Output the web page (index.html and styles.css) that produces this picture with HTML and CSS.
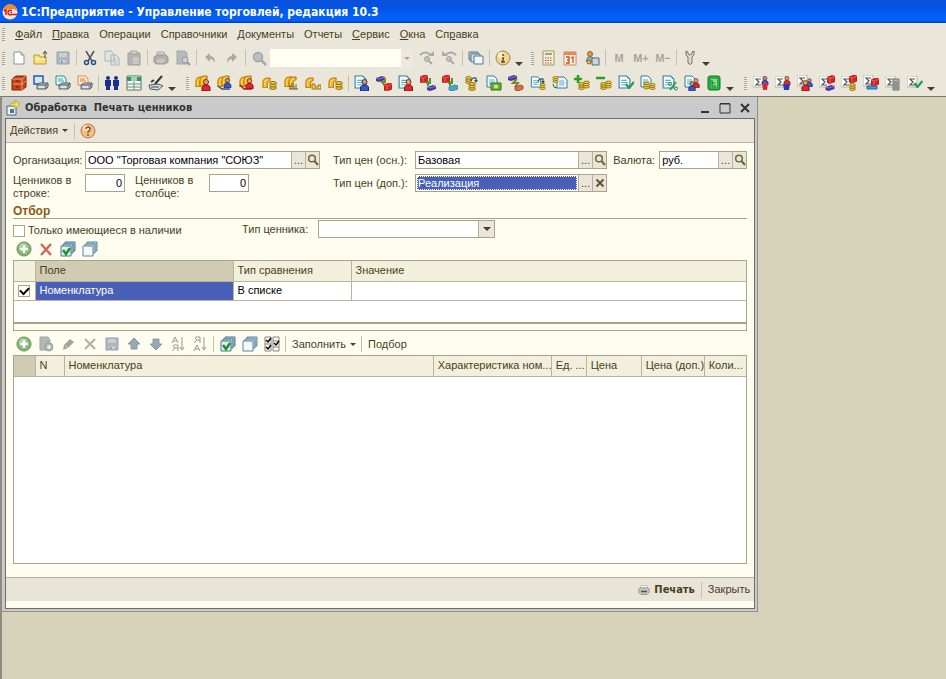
FILE: index.html
```
<!DOCTYPE html>
<html lang="ru">
<head>
  <meta charset="utf-8">
  <title>1С:Предприятие - Управление торговлей, редакция 10.3</title>
  <link rel="stylesheet" href="styles.css">
</head>
<body>
  <svg class="sprite" aria-hidden="true">
    <!-- parts used by the composite icons -->
    <symbol id="man-r" viewBox="0 0 10 12"><circle cx="5" cy="3" r="2.5" fill="#e8a070" stroke="#7a3020"/><path d="M1 12V8l2-2h4l2 2v4z" fill="#e0282c" stroke="#8a1018"/></symbol>
    <symbol id="man-b" viewBox="0 0 10 12"><circle cx="5" cy="3" r="2.5" fill="#c89878" stroke="#4a3040"/><path d="M1 12V8l2-2h4l2 2v4z" fill="#3858c0" stroke="#182a78"/></symbol>
    <symbol id="coin" viewBox="0 0 10 12"><path d="M1 12V6q0-5 5-5h3v3q-3 0-3 3v5z" fill="#f6b91c" stroke="#a86c08"/><path d="M3 10V6q0-3 4-3" fill="none" stroke="#ffe070"/></symbol>
    <symbol id="coins" viewBox="0 0 8 9"><g fill="#f2d040" stroke="#8a6a10"><ellipse cx="4" cy="7" rx="3.4" ry="1.4"/><ellipse cx="4" cy="4.500" rx="3.400" ry="1.400"/><ellipse cx="4" cy="2" rx="3.400" ry="1.400"/></g></symbol>
    <symbol id="sheet" viewBox="0 0 12 13"><path d="M1 1h7l3 3v8H1z" fill="#f4fcff" stroke="#2c7f9c"/><path d="M3 5h5M3 7h6M3 9h5" stroke="#58b0c8"/></symbol>
    <symbol id="cube" viewBox="0 0 8 8"><path d="M0 2l5-2 3 1v5L3 8 0 7z" fill="#d82424" stroke="#8c0e12" stroke-width=".7"/><path d="M0 2l3 1 5-2M3 3v5" stroke="#ff7060" stroke-width=".7" fill="none"/></symbol>
    <symbol id="slab" viewBox="0 0 9 6"><path d="M0 2l6-2 3 1v3L3 6 0 5z" fill="#4438a0"/><path d="M0 2l3 1 6-2" stroke="#9088e0" fill="none" stroke-width=".8"/></symbol>
    <symbol id="sigma" viewBox="0 0 11 12"><path d="M0 0h10v11H0z" fill="#fdfdfa" stroke="#b4b4aa"/><path d="M8 3H3l3 3-3 3h5" fill="none" stroke="#555" stroke-width="1.200"/></symbol>
    <symbol id="tick" viewBox="0 0 9 8"><path d="M1 3l3 4 5-6" fill="none" stroke="#249a50" stroke-width="2.200"/></symbol>
    <symbol id="turn" viewBox="0 0 9 7"><path d="M1 5q1-4 5-3v3" fill="none" stroke="#3a5060" stroke-width="1.200"/><path d="M4 4h4L6 7z" fill="#3a5060"/></symbol>
    <symbol id="chart" viewBox="0 0 10 9"><path d="M1 8h9M2 8V4M4 8V2M6 8V5M8 8V3" stroke="#6c5a20" fill="none"/></symbol>
    <symbol id="prn" viewBox="0 0 13 8"><path d="M1 3l3-2h8v4l-2 2H1z" fill="#c2c8cc" stroke="#545c66"/><path d="M1 3h9v4M10 3l2-2" fill="none" stroke="#545c66"/><path d="M3 5h5" stroke="#fff"/></symbol>

    <!-- standard toolbar -->
    <symbol id="logo" viewBox="0 0 16 16"><circle cx="8" cy="8" r="7.500" fill="#f7e3d0"/><path d="M1 7a7 7 0 0 1 14 0l-3-2H5z" fill="#f08a30"/><path d="M2 7l2-1v5M10 6.500q-4-1-4 2t4 2h5M10 8.500H8.500" fill="none" stroke="#d0201c" stroke-width="1.500"/></symbol>
    <symbol id="new" viewBox="0 0 16 16"><path d="M3 2h7l3 3v9H3z" fill="#fdfefe" stroke="#8296a0"/><path d="M10 2v3h3" fill="#cfe0e8" stroke="#8296a0"/></symbol>
    <symbol id="open" viewBox="0 0 16 16"><path d="M1 5h5l1 2h6v7H1z" fill="#f5e27c" stroke="#b39a38"/><path d="M2 9h10" stroke="#fff6b8"/><path d="M12 8V2M10 4l2-3 2 3" fill="none" stroke="#555030"/></symbol>
    <symbol id="save" viewBox="0 0 16 16"><path d="M2 2h12v12H2z" fill="#aab6c0" stroke="#97a4af"/><path d="M4 3h8v4H4zM5 10h6v3H5z" fill="#c8d0d4"/><path d="M6 11h1v2" stroke="#8794a0"/></symbol>
    <symbol id="cut" viewBox="0 0 16 16"><path d="M4 1l6 10M12 1L6 11" stroke="#50565e" stroke-width="1.500"/><circle cx="4.500" cy="12.500" r="2" fill="none" stroke="#2a4c8c" stroke-width="1.500"/><circle cx="11.500" cy="12.500" r="2" fill="none" stroke="#2a4c8c" stroke-width="1.500"/></symbol>
    <symbol id="copy" viewBox="0 0 16 16"><g fill="#dfe3e2" stroke="#a8b2b6"><path d="M1 1h6l3 3v7H1zM7 5h5l3 3v7H7z"/></g><path d="M9 9h3M9 11h4M9 13h4" stroke="#b6c0c4"/></symbol>
    <symbol id="paste" viewBox="0 0 16 16"><path d="M2 3h12v12H2z" fill="#b4b4b2" stroke="#a09f9c"/><path d="M5 1h6v3H5z" fill="#dad8d0" stroke="#a09f9c"/><path d="M7 7h6v7H7z" fill="#c6c8c8"/></symbol>
    <symbol id="print" viewBox="0 0 16 16"><path d="M4 2h7l1 4H4z" fill="#d4d2ca" stroke="#aaa9a3"/><path d="M1 7l3-2h9l2 2v5l-3 2H3l-2-2z" fill="#b0afaa" stroke="#9c9b97"/><path d="M4 10h8M4 12h7" stroke="#dddad2"/></symbol>
    <symbol id="preview" viewBox="0 0 16 16"><path d="M2 1h8l2 2v11H2z" fill="#b6babc" stroke="#a4a8aa"/><circle cx="10" cy="10" r="3" fill="#ccd0d0" stroke="#93989c"/><path d="M12 12l3 3" stroke="#93989c" stroke-width="2"/></symbol>
    <symbol id="undo" viewBox="0 0 16 16"><path d="M3 7l5-4v3q5 0 5 7-2-4-5-4v3z" fill="#aaa8a2"/></symbol>
    <symbol id="redo" viewBox="0 0 16 16"><path d="M13 7L8 3v3q-5 0-5 7 2-4 5-4v3z" fill="#aaa8a2"/></symbol>
    <symbol id="find" viewBox="0 0 16 16"><circle cx="7" cy="7" r="4.500" fill="#b9bfc4" stroke="#a0a4a8" stroke-width="1.500"/><path d="M10 10l5 5" stroke="#aaa8a4" stroke-width="2.500"/></symbol>
    <symbol id="next" viewBox="0 0 16 16"><path d="M1 5q5-5 11 0" fill="none" stroke="#aaa9a4" stroke-width="2"/><path d="M9 6h6V1z" fill="#aaa9a4"/><circle cx="8" cy="9" r="2.500" fill="#c0c2c2" stroke="#a0a2a4"/><path d="M10 11l3 3" stroke="#a8a6a2" stroke-width="2"/></symbol>
    <symbol id="prev" viewBox="0 0 16 16"><path d="M15 5Q10 0 4 5" fill="none" stroke="#aaa9a4" stroke-width="2"/><path d="M7 6H1V1z" fill="#aaa9a4"/><circle cx="8" cy="9" r="2.500" fill="#c0c2c2" stroke="#a0a2a4"/><path d="M10 11l3 3" stroke="#a8a6a2" stroke-width="2"/></symbol>
    <symbol id="windows" viewBox="0 0 16 16"><g stroke="#55788c"><path d="M1 2h9v8H1z" fill="#b4cbd6"/><path d="M3 4h9v8H3z" fill="#cfe0e8"/><path d="M6 6h9v8H6z" fill="#f2f8fa"/></g></symbol>
    <symbol id="info" viewBox="0 0 16 16"><circle cx="8" cy="8" r="7" fill="#f0d490" stroke="#a08548"/><circle cx="6" cy="5" r="3" fill="#fcf0c8"/><path d="M8 4v2M8 7v5M6 12h4" stroke="#5c5030" stroke-width="1.600"/></symbol>
    <symbol id="calc" viewBox="0 0 16 16"><path d="M3 1h11v14H3z" fill="#f4f0d8" stroke="#a09868"/><path d="M5 3h7v2H5z" fill="#a8a070"/><path d="M5 8h7M5 10.500h7M5 13h7" stroke="#a85838" stroke-dasharray="1.500 1"/></symbol>
    <symbol id="cal" viewBox="0 0 16 16"><path d="M2 2h12v13H2z" fill="#fff6e4" stroke="#c08868"/><path d="M2 2h12v3H2z" fill="#e88850"/><path d="M4 7h3v6H4M5 10h2M9 8l2-1v6" fill="none" stroke="#d04820" stroke-width="1.300"/></symbol>
    <symbol id="users" viewBox="0 0 16 16"><circle cx="6" cy="4" r="2.500" fill="#e89a38" stroke="#9c6018"/><path d="M2 11l2-4h4l2 4z" fill="#a4b4c0" stroke="#627480"/><path d="M8 8h7v7H8z" fill="#c8d6de" stroke="#506878"/><circle cx="5" cy="12" r="2" fill="#e0c460" stroke="#806820"/></symbol>
    <symbol id="wrench" viewBox="0 0 16 16"><path d="M4 1v4l2 2v6q2 3 4 0V7l2-2V1l-2 1v2l-2 1-2-1V2z" fill="#dedad0" stroke="#77736c"/></symbol>

    <!-- trade toolbars -->
    <symbol id="box" viewBox="0 0 16 16"><path d="M1 4l4-3h10v11l-4 3H1z" fill="#c44418" stroke="#7a250c"/><path d="M1 4h10v11M11 4l4-3M2 9h9l4-3" fill="none" stroke="#f2a070"/><path d="M5 6h3M5 12h3" stroke="#601c08"/></symbol>
    <symbol id="pc-b" viewBox="0 0 16 16"><path d="M1 1h9v8H1z" fill="#d2e8ff" stroke="#2858b0" stroke-width="1.500"/><use href="#prn" x="3" y="7" width="13" height="8"/></symbol>
    <symbol id="pc-g" viewBox="0 0 16 16"><path d="M1 1h8l2 3v6H1z" fill="#e4f8f4" stroke="#308c90"/><path d="M3 4h5M3 6h6" stroke="#48a8a0"/><use href="#prn" x="3" y="7" width="13" height="8"/></symbol>
    <symbol id="pc-o" viewBox="0 0 16 16"><path d="M1 1h8l2 3v6H1z" fill="#fff0dc" stroke="#e08848"/><path d="M3 4h5M3 6h6" stroke="#e07030"/><use href="#prn" x="3" y="7" width="13" height="8"/></symbol>
    <symbol id="pair" viewBox="0 0 16 16"><g fill="#182f90"><circle cx="4" cy="3" r="2"/><circle cx="12" cy="3" r="2"/><path d="M1 5h6v6H6v4H2v-4H1zM9 5h6v6h-1v4h-4v-4H9z"/></g></symbol>
    <symbol id="grid" viewBox="0 0 16 16"><path d="M1 1h14v14H1z" fill="#f8fcf6" stroke="#557a68"/><path d="M1 2h14v4H1z" fill="#389464"/><path d="M5 2h6v4H5z" fill="#98d8ac"/><path d="M1 9h14M1 12h14M8 6v9" stroke="#6c8c7c"/></symbol>
    <symbol id="write" viewBox="0 0 16 16"><path d="M1 10l9-1 5 2-5 4-8-1z" fill="#d8dce0" stroke="#505860"/><path d="M3 7l3-2M14 1L7 9" stroke="#303840" stroke-width="2"/><path d="M3 12h8" stroke="#404850"/></symbol>
    <symbol id="c-r" viewBox="0 0 16 16"><use href="#coin" x="0" y="1" width="9" height="11"/><use href="#coin" x="4" y="0" width="9" height="11"/><use href="#man-r" x="6" y="4" width="10" height="12"/></symbol>
    <symbol id="c-b" viewBox="0 0 16 16"><use href="#coin" x="0" y="1" width="9" height="11"/><use href="#coin" x="4" y="0" width="9" height="11"/><use href="#man-b" x="6" y="3" width="9" height="10"/><path d="M1 11l4 3h8" fill="none" stroke="#404870" stroke-width="1.500"/></symbol>
    <symbol id="c-rr" viewBox="0 0 16 16"><use href="#coin" x="0" y="1" width="9" height="11"/><use href="#coin" x="4" y="0" width="9" height="11"/><use href="#man-r" x="6" y="3" width="9" height="11"/><path d="M1 10l4 4h8" fill="none" stroke="#a01c18" stroke-width="1.500"/></symbol>
    <symbol id="c-c" viewBox="0 0 16 16"><use href="#coin" x="1" y="2" width="9" height="11"/><use href="#coins" x="8" y="6" width="8" height="9"/></symbol>
    <symbol id="c-h" viewBox="0 0 16 16"><use href="#coin" x="1" y="1" width="9" height="11"/><use href="#coin" x="5" y="1" width="9" height="11"/><use href="#chart" x="5" y="6" width="10" height="9"/></symbol>
    <symbol id="c-s" viewBox="0 0 16 16"><use href="#coin" x="0" y="2" width="9" height="11"/><path d="M7 9h3v3h3v-2h3v4H7z" fill="#f0d050" stroke="#967214"/></symbol>
    <symbol id="s-b" viewBox="0 0 16 16"><use href="#sheet" x="0" y="0" width="13" height="14"/><use href="#man-b" x="5" y="4" width="11" height="12"/></symbol>
    <symbol id="s-r" viewBox="0 0 16 16"><use href="#sheet" x="0" y="0" width="13" height="14"/><use href="#man-r" x="5" y="4" width="11" height="12"/></symbol>
    <symbol id="move-a" viewBox="0 0 16 16"><use href="#slab" x="0" y="1" width="9" height="6"/><path d="M9 3v4H6l3 4" fill="none" stroke="#7a8820" stroke-width="2"/><use href="#cube" x="8" y="8" width="8" height="8"/></symbol>
    <symbol id="move-b" viewBox="0 0 16 16"><use href="#cube" x="0" y="0" width="8" height="8"/><path d="M10 3v5H6M8 6v5" fill="none" stroke="#52982c" stroke-width="2"/><use href="#slab" x="7" y="10" width="9" height="6"/></symbol>
    <symbol id="move-d" viewBox="0 0 16 16"><use href="#cube" x="0" y="0" width="8" height="8"/><path d="M10 3v5H6M8 6v5" fill="none" stroke="#52982c" stroke-width="2"/><path d="M7 12l6-2 3 1v3l-6 2-3-1z" fill="#48a8d4" stroke="#286890" stroke-width=".7"/></symbol>
    <symbol id="move-c" viewBox="0 0 16 16"><use href="#slab" x="0" y="0" width="9" height="6"/><path d="M9 4L5 8h5l-3 4" fill="none" stroke="#7a8820" stroke-width="2"/><path d="M7 12l5-2 3 1v3l-5 2-3-1z" fill="#e06a50" stroke="#8a3020" stroke-width=".7"/></symbol>
    <symbol id="cc" viewBox="0 0 16 16"><use href="#coins" x="1" y="1" width="7" height="8"/><use href="#coins" x="4" y="7" width="8" height="9"/><use href="#turn" x="6" y="1" width="9" height="7"/></symbol>
    <symbol id="s-g" viewBox="0 0 16 16"><use href="#sheet" x="0" y="0" width="12" height="13"/><path d="M5 8h10v7H5z" fill="#6cae34" stroke="#35701c"/><circle cx="10" cy="11.500" r="2" fill="#d8e878"/></symbol>
    <symbol id="s-t" viewBox="0 0 16 16"><use href="#sheet" x="0" y="1" width="12" height="12"/><use href="#coins" x="9" y="8" width="7" height="7"/><use href="#turn" x="7" y="2" width="9" height="7"/></symbol>
    <symbol id="s-u" viewBox="0 0 16 16"><use href="#sheet" x="4" y="1" width="12" height="13"/><use href="#coins" x="0" y="1" width="7" height="7"/><path d="M1 9q0 4 4 4" fill="none" stroke="#3a5060"/></symbol>
    <symbol id="plus-c" viewBox="0 0 16 16"><path d="M4 0v8M0 4h8" stroke="#28a028" stroke-width="2.500"/><use href="#coins" x="4" y="7" width="7" height="8"/><use href="#coins" x="9" y="4" width="7" height="11"/></symbol>
    <symbol id="minus-c" viewBox="0 0 16 16"><path d="M0 3h9" stroke="#28a028" stroke-width="2.500"/><use href="#coins" x="4" y="7" width="7" height="8"/><use href="#coins" x="9" y="4" width="7" height="11"/></symbol>
    <symbol id="s-v" viewBox="0 0 16 16"><use href="#sheet" x="0" y="0" width="13" height="14"/><use href="#tick" x="7" y="6" width="9" height="8"/></symbol>
    <symbol id="s-c" viewBox="0 0 16 16"><use href="#sheet" x="0" y="0" width="12" height="13"/><use href="#coins" x="3" y="6" width="7" height="9"/><use href="#coins" x="9" y="8" width="7" height="7"/></symbol>
    <symbol id="s-p" viewBox="0 0 16 16"><use href="#sheet" x="0" y="0" width="13" height="14"/><path d="M14 7l-6 8" stroke="#209048" stroke-width="1.500"/><circle cx="8" cy="9" r="1.500" fill="none" stroke="#209048"/><circle cx="14" cy="13.500" r="1.500" fill="none" stroke="#209048"/></symbol>
    <symbol id="s-rb" viewBox="0 0 16 16"><use href="#sheet" x="0" y="0" width="12" height="13"/><use href="#man-r" x="8" y="3" width="8" height="10"/><use href="#man-b" x="4" y="6" width="8" height="10"/></symbol>
    <symbol id="book" viewBox="0 0 16 16"><rect x="2" y="1" width="12" height="14" rx="2" fill="#28b044" stroke="#127028"/><path d="M5 4h6v8H5z" fill="#80e088"/><path d="M6 5v6h4M6 8h3" fill="none" stroke="#127028"/></symbol>
    <symbol id="g-1" viewBox="0 0 16 16"><use href="#sigma" x="0" y="1" width="11" height="12"/><use href="#man-b" x="8" y="1" width="8" height="9"/><path d="M9 8h6l-1 7h-4z" fill="#d82838"/></symbol>
    <symbol id="g-2" viewBox="0 0 16 16"><use href="#sigma" x="0" y="1" width="11" height="12"/><use href="#man-r" x="8" y="1" width="8" height="9"/><path d="M8 9h7l-1 6H9z" fill="#3038b0"/></symbol>
    <symbol id="g-3" viewBox="0 0 16 16"><use href="#sigma" x="0" y="0" width="11" height="12"/><use href="#man-b" x="9" y="3" width="7" height="9"/><use href="#man-r" x="4" y="5" width="9" height="11"/></symbol>
    <symbol id="g-4" viewBox="0 0 16 16"><use href="#sigma" x="0" y="1" width="11" height="12"/><use href="#cube" x="8" y="0" width="8" height="9"/><use href="#slab" x="6" y="10" width="10" height="6"/></symbol>
    <symbol id="g-5" viewBox="0 0 16 16"><use href="#sigma" x="0" y="1" width="11" height="12"/><use href="#cube" x="8" y="0" width="8" height="8"/><use href="#coins" x="8" y="8" width="7" height="8"/></symbol>
    <symbol id="g-6" viewBox="0 0 16 16"><use href="#sigma" x="0" y="0" width="11" height="12"/><use href="#cube" x="8" y="3" width="8" height="8"/><path d="M4 11h10v3H4z" fill="#40a0d0" stroke="#2860a0"/></symbol>
    <symbol id="g-7" viewBox="0 0 16 16"><use href="#sigma" x="0" y="1" width="11" height="12"/><path d="M8 4h6v11H8z" fill="#b4b4b0" stroke="#70706c"/><path d="M9 7h4M9 9h4M9 11h4M9 13h4" stroke="#70706c"/></symbol>
    <symbol id="g-8" viewBox="0 0 16 16"><use href="#sigma" x="0" y="1" width="11" height="12"/><use href="#tick" x="6" y="5" width="10" height="8"/></symbol>

    <!-- window and grid commands -->
    <symbol id="proc" viewBox="0 0 16 16"><path d="M2 6h9v9H2z" fill="#eaf2f6" stroke="#406c88"/><path d="M5 9h4v4H5z" fill="#3f7ba0"/><path d="M5 7q0-5 5-4V0l5 4-5 5V6Q7 5 5 7z" fill="#f0e060" stroke="#a09030" stroke-width=".7"/></symbol>
    <symbol id="help" viewBox="0 0 16 16"><circle cx="8" cy="8" r="7" fill="#f4bd86" stroke="#b07a48"/><circle cx="6" cy="5" r="3" fill="#fce0c0"/><path d="M6 6q0-2 2-2t2 2-2 3v1M8 11v2" fill="none" stroke="#8a4c20" stroke-width="1.400"/></symbol>
    <symbol id="add" viewBox="0 0 16 16"><circle cx="8" cy="8" r="7" fill="#8ab878" stroke="#5f9058"/><circle cx="7" cy="6" r="4" fill="#a8cf96"/><path d="M8 4v8M4 8h8" stroke="#fff" stroke-width="2.500"/></symbol>
    <symbol id="del" viewBox="0 0 16 16"><path d="M3 3l10 11M13 3L3 14" stroke="#d06858" stroke-width="2.500"/></symbol>
    <symbol id="all" viewBox="0 0 16 16"><g stroke="#447890"><path d="M5 1h10v9H5z" fill="#a4c8d8"/><path d="M3 3h10v9H3z" fill="#b8d6e2"/><path d="M1 5h10v10H1z" fill="#e0f0ea"/></g><path d="M3 9l3 4 4-6" fill="none" stroke="#229030" stroke-width="2.500"/></symbol>
    <symbol id="none" viewBox="0 0 16 16"><g stroke="#5c87a0"><path d="M5 1h10v9H5z" fill="#a8c8dc"/><path d="M3 3h10v9H3z" fill="#bcd6e4"/><path d="M1 5h10v10H1z" fill="#f4f9fc"/></g></symbol>
    <symbol id="addcopy" viewBox="0 0 16 16"><path d="M2 1h8l2 3v10H2z" fill="#b0b9b6" stroke="#9ca8a8"/><circle cx="11" cy="11" r="4" fill="#b4bcb4" stroke="#949c98"/><path d="M11 9v4M9 11h4" stroke="#fff"/></symbol>
    <symbol id="edit" viewBox="0 0 16 16"><path d="M3 14l1-5 6-6 4 3-6 6z" fill="#a2a39c"/><path d="M5 9l3 3" stroke="#d8d6cc"/></symbol>
    <symbol id="delg" viewBox="0 0 16 16"><path d="M3 3l10 10M13 3L3 13" stroke="#b2b0a8" stroke-width="2"/></symbol>
    <symbol id="up" viewBox="0 0 16 16"><path d="M8 2l6 6h-3v5H5V8H2z" fill="#9aa8b2" stroke="#8798a4"/></symbol>
    <symbol id="down" viewBox="0 0 16 16"><path d="M8 14l6-6h-3V3H5v5H2z" fill="#9aa8b2" stroke="#8798a4"/></symbol>
    <symbol id="asc" viewBox="0 0 16 16"><path d="M2 7l3-6 3 6M3 5h4M8 15V9H4q-2 2 1 3h3M5 12l-3 3M12 1v12M10 11l2 3 2-3" fill="none" stroke="#999a94"/></symbol>
    <symbol id="desc" viewBox="0 0 16 16"><path d="M2 15l3-6 3 6M3 13h4M8 7V1H4Q2 3 5 4h3M5 4L2 7M12 1v12M10 11l2 3 2-3" fill="none" stroke="#999a94"/></symbol>
    <symbol id="marks" viewBox="0 0 16 16"><path d="M1 1h6v14H1zM9 1h6v14H9z" fill="#f8f8f0" stroke="#88887c"/><path d="M1 8h6M9 5h6M9 11h6" stroke="#88887c"/><path d="M2 4l2 2 3-4M2 11l2 2 3-4M10 7l2 2 3-4" fill="none" stroke="#000" stroke-width="1.400"/></symbol>
    <symbol id="printer" viewBox="0 0 16 16"><path d="M4 2h8l1 4H3z" fill="#fff" stroke="#b4b2ac"/><path d="M1 7l2-2h10l2 2v4l-3 3H4l-3-3z" fill="#c4c4c0" stroke="#84847e"/><path d="M4 9h8v2H4z" fill="#4c4c48"/></symbol>
    <symbol id="lens" viewBox="0 0 12 12"><circle cx="5" cy="4.500" r="3.300" fill="none" stroke="#6d6835" stroke-width="1.500"/><path d="M7.500 7l3.500 4" stroke="#6d6835" stroke-width="2"/></symbol>
    <symbol id="cross" viewBox="0 0 12 12"><path d="M2.500 2.500l7 7M9.500 2.500l-7 7" stroke="#5c5630" stroke-width="2"/></symbol>
    <symbol id="w-min" viewBox="0 0 12 12"><path d="M2 10h8" stroke="#333" stroke-width="2"/></symbol>
    <symbol id="w-max" viewBox="0 0 12 12"><path d="M1 2h10v9H1z" fill="none" stroke="#333"/><path d="M1 1.500h10" stroke="#333"/></symbol>
    <symbol id="w-close" viewBox="0 0 12 12"><path d="M2 2l8 8M10 2l-8 8" stroke="#333" stroke-width="2"/></symbol>
  </svg>

  <header class="title-bar">
    <svg class="icon"><use href="#logo"/></svg>
    <h1>1С:Предприятие - Управление торговлей, редакция 10.3</h1>
  </header>

  <nav class="menu">
    <span class="grip"></span>
    <a href="#"><u>Ф</u>айл</a>
    <a href="#"><u>П</u>равка</a>
    <a href="#">Операции</a>
    <a href="#">Справочники</a>
    <a href="#">Документы</a>
    <a href="#">Отчеты</a>
    <a href="#"><u>С</u>ервис</a>
    <a href="#"><u>О</u>кна</a>
    <a href="#">Сп<u>р</u>авка</a>
  </nav>

  <div class="toolbar">
    <div class="group">
      <span class="grip"></span>
      <button aria-label="Новый"><svg class="icon"><use href="#new"/></svg></button>
      <button aria-label="Открыть"><svg class="icon"><use href="#open"/></svg></button>
      <button aria-label="Сохранить"><svg class="icon"><use href="#save"/></svg></button>
      <span class="sep"></span>
      <button aria-label="Вырезать"><svg class="icon"><use href="#cut"/></svg></button>
      <button aria-label="Копировать"><svg class="icon"><use href="#copy"/></svg></button>
      <button aria-label="Вставить"><svg class="icon"><use href="#paste"/></svg></button>
      <span class="sep"></span>
      <button aria-label="Печать"><svg class="icon"><use href="#print"/></svg></button>
      <button aria-label="Просмотр"><svg class="icon"><use href="#preview"/></svg></button>
      <span class="sep"></span>
      <button aria-label="Отменить"><svg class="icon"><use href="#undo"/></svg></button>
      <button aria-label="Вернуть"><svg class="icon"><use href="#redo"/></svg></button>
      <span class="sep"></span>
      <button aria-label="Найти"><svg class="icon"><use href="#find"/></svg></button>
      <div class="search">
        <input type="text" aria-label="Поиск">
        <button class="drop" aria-label="История поиска"></button>
      </div>
      <button aria-label="Найти следующий"><svg class="icon"><use href="#next"/></svg></button>
      <button aria-label="Найти предыдущий"><svg class="icon"><use href="#prev"/></svg></button>
      <span class="sep"></span>
      <button aria-label="Окна"><svg class="icon"><use href="#windows"/></svg></button>
      <span class="sep"></span>
      <button aria-label="Справка"><svg class="icon"><use href="#info"/></svg></button>
      <button class="more" aria-label="Еще"></button>
    </div>
    <div class="group">
      <span class="grip"></span>
      <button aria-label="Калькулятор"><svg class="icon"><use href="#calc"/></svg></button>
      <button aria-label="Календарь"><svg class="icon"><use href="#cal"/></svg></button>
      <button aria-label="Пользователи"><svg class="icon"><use href="#users"/></svg></button>
      <span class="sep"></span>
      <button class="mem">M</button>
      <button class="mem">M+</button>
      <button class="mem">M−</button>
      <span class="sep"></span>
      <button aria-label="Параметры"><svg class="icon"><use href="#wrench"/></svg></button>
      <button class="more" aria-label="Еще"></button>
    </div>
  </div>

  <div class="toolbar trade">
    <div class="group">
      <span class="grip"></span>
      <button aria-label="Номенклатура"><svg class="icon"><use href="#box"/></svg></button>
      <button aria-label="Чеки"><svg class="icon"><use href="#pc-b"/></svg></button>
      <button aria-label="Накладные"><svg class="icon"><use href="#pc-g"/></svg></button>
      <button aria-label="Ценники"><svg class="icon"><use href="#pc-o"/></svg></button>
      <span class="sep"></span>
      <button aria-label="Контрагенты"><svg class="icon"><use href="#pair"/></svg></button>
      <button aria-label="Прайс-лист"><svg class="icon"><use href="#grid"/></svg></button>
      <button aria-label="Договоры"><svg class="icon"><use href="#write"/></svg></button>
      <button class="more" aria-label="Еще"></button>
    </div>
    <div class="group">
      <span class="grip"></span>
      <button aria-label="Долги"><svg class="icon"><use href="#c-r"/></svg></button>
      <button aria-label="Покупатели"><svg class="icon"><use href="#c-b"/></svg></button>
      <button aria-label="Поставщики"><svg class="icon"><use href="#c-rr"/></svg></button>
      <button aria-label="Касса"><svg class="icon"><use href="#c-c"/></svg></button>
      <button aria-label="Продажи"><svg class="icon"><use href="#c-h"/></svg></button>
      <button aria-label="Закупки"><svg class="icon"><use href="#c-s"/></svg></button>
      <button aria-label="Платежи"><svg class="icon"><use href="#c-c"/></svg></button>
      <span class="sep"></span>
      <button aria-label="Заказ покупателя"><svg class="icon"><use href="#s-b"/></svg></button>
      <button aria-label="Реализация"><svg class="icon"><use href="#move-a"/></svg></button>
      <button aria-label="Заказ поставщику"><svg class="icon"><use href="#s-r"/></svg></button>
      <button aria-label="Поступление"><svg class="icon"><use href="#move-b"/></svg></button>
      <button aria-label="Перемещение"><svg class="icon"><use href="#move-d"/></svg></button>
      <button aria-label="Обмен валют"><svg class="icon"><use href="#cc"/></svg></button>
      <button aria-label="Счет"><svg class="icon"><use href="#s-g"/></svg></button>
      <button aria-label="Возврат"><svg class="icon"><use href="#move-c"/></svg></button>
      <button aria-label="Исходящий платеж"><svg class="icon"><use href="#s-t"/></svg></button>
      <button aria-label="Входящий платеж"><svg class="icon"><use href="#s-u"/></svg></button>
      <button aria-label="Приходный ордер"><svg class="icon"><use href="#plus-c"/></svg></button>
      <button aria-label="Расходный ордер"><svg class="icon"><use href="#minus-c"/></svg></button>
      <button aria-label="Проверка"><svg class="icon"><use href="#s-v"/></svg></button>
      <button aria-label="Ведомость"><svg class="icon"><use href="#s-c"/></svg></button>
      <button aria-label="Скидки"><svg class="icon"><use href="#s-p"/></svg></button>
      <button aria-label="Взаиморасчеты"><svg class="icon"><use href="#s-rb"/></svg></button>
      <button aria-label="Книга"><svg class="icon"><use href="#book"/></svg></button>
      <button class="more" aria-label="Еще"></button>
    </div>
    <div class="group">
      <span class="grip"></span>
      <button aria-label="Отчет по продавцам"><svg class="icon"><use href="#g-1"/></svg></button>
      <button aria-label="Отчет по покупателям"><svg class="icon"><use href="#g-2"/></svg></button>
      <button aria-label="Отчет по расчетам"><svg class="icon"><use href="#g-3"/></svg></button>
      <button aria-label="Отчет по складу"><svg class="icon"><use href="#g-4"/></svg></button>
      <button aria-label="Отчет по товарам"><svg class="icon"><use href="#g-5"/></svg></button>
      <button aria-label="Отчет по партиям"><svg class="icon"><use href="#g-6"/></svg></button>
      <button aria-label="Отчет по ценам"><svg class="icon"><use href="#g-7"/></svg></button>
      <button aria-label="Итоги"><svg class="icon"><use href="#g-8"/></svg></button>
      <button class="more" aria-label="Еще"></button>
    </div>
  </div>

  <main class="workspace">
    <section class="window">
      <div class="window-title">
        <svg class="icon"><use href="#proc"/></svg>
        <h2>Обработка&nbsp; Печать ценников</h2>
        <button aria-label="Свернуть"><svg><use href="#w-min"/></svg></button>
        <button aria-label="Развернуть"><svg><use href="#w-max"/></svg></button>
        <button aria-label="Закрыть окно"><svg><use href="#w-close"/></svg></button>
      </div>
      <form class="window-body">
        <div class="actions">
          <button type="button" class="text arrow">Действия</button>
          <span class="sep"></span>
          <button type="button" aria-label="Помощь"><svg class="icon"><use href="#help"/></svg></button>
        </div>

        <div class="content">
          <div class="fields">
            <label for="org">Организация:</label>
            <div class="field">
              <input id="org" type="text" value='ООО "Торговая компания "СОЮЗ"'>
              <button type="button" aria-label="Выбрать организацию">...</button>
              <button type="button" aria-label="Открыть организацию"><svg><use href="#lens"/></svg></button>
            </div>
            <label class="second" for="price">Тип цен (осн.):</label>
            <div class="field">
              <input id="price" type="text" value="Базовая">
              <button type="button" aria-label="Выбрать тип цен">...</button>
              <button type="button" aria-label="Открыть тип цен"><svg><use href="#lens"/></svg></button>
            </div>
            <label class="third" for="cur">Валюта:</label>
            <div class="field">
              <input id="cur" type="text" value="руб.">
              <button type="button" aria-label="Выбрать валюту">...</button>
              <button type="button" aria-label="Открыть валюту"><svg><use href="#lens"/></svg></button>
            </div>

            <label class="tall" for="per-row">Ценников в строке:</label>
            <div class="counts">
              <div class="field number"><input id="per-row" type="text" value="0"></div>
              <label class="tall" for="per-col">Ценников в столбце:</label>
              <div class="field number"><input id="per-col" type="text" value="0"></div>
            </div>
            <label class="second" for="price2">Тип цен (доп.):</label>
            <div class="field selected">
              <input id="price2" type="text" value="Реализация">
              <button type="button" aria-label="Выбрать дополнительный тип цен">...</button>
              <button type="button" aria-label="Очистить"><svg><use href="#cross"/></svg></button>
            </div>
          </div>

          <h3>Отбор</h3>
          <div class="options">
            <label class="check"><input type="checkbox">Только имеющиеся в наличии</label>
            <label for="tag">Тип ценника:</label>
            <div class="field pick">
              <select id="tag"><option></option></select>
            </div>
          </div>

          <div class="commands">
            <button type="button" aria-label="Добавить отбор"><svg class="icon"><use href="#add"/></svg></button>
            <button type="button" aria-label="Удалить отбор"><svg class="icon"><use href="#del"/></svg></button>
            <button type="button" aria-label="Включить все"><svg class="icon"><use href="#all"/></svg></button>
            <button type="button" aria-label="Выключить все"><svg class="icon"><use href="#none"/></svg></button>
          </div>

          <div class="grid filter">
            <table>
              <colgroup><col class="c-mark"><col class="c-name"><col class="c-kind"><col></colgroup>
              <thead>
                <tr><th></th><th class="current">Поле</th><th>Тип сравнения</th><th>Значение</th></tr>
              </thead>
              <tbody>
                <tr>
                  <td class="mark"><input type="checkbox" aria-label="Использовать" checked></td>
                  <td class="active">Номенклатура</td>
                  <td>В списке</td>
                  <td></td>
                </tr>
              </tbody>
            </table>
          </div>

          <div class="commands goods-commands">
            <button type="button" aria-label="Добавить"><svg class="icon"><use href="#add"/></svg></button>
            <button type="button" aria-label="Добавить копированием"><svg class="icon"><use href="#addcopy"/></svg></button>
            <button type="button" aria-label="Изменить"><svg class="icon"><use href="#edit"/></svg></button>
            <button type="button" aria-label="Удалить"><svg class="icon"><use href="#delg"/></svg></button>
            <button type="button" aria-label="Закончить редактирование"><svg class="icon"><use href="#save"/></svg></button>
            <button type="button" aria-label="Вверх"><svg class="icon"><use href="#up"/></svg></button>
            <button type="button" aria-label="Вниз"><svg class="icon"><use href="#down"/></svg></button>
            <button type="button" aria-label="По возрастанию"><svg class="icon"><use href="#asc"/></svg></button>
            <button type="button" aria-label="По убыванию"><svg class="icon"><use href="#desc"/></svg></button>
            <span class="sep"></span>
            <button type="button" aria-label="Отметить все"><svg class="icon"><use href="#all"/></svg></button>
            <button type="button" aria-label="Снять отметки"><svg class="icon"><use href="#none"/></svg></button>
            <button type="button" aria-label="Инвертировать"><svg class="icon"><use href="#marks"/></svg></button>
            <span class="sep"></span>
            <button type="button" class="text arrow">Заполнить</button>
            <span class="sep"></span>
            <button type="button" class="text">Подбор</button>
          </div>

          <div class="grid goods">
            <table>
              <colgroup><col class="c-mark"><col class="c-num"><col><col class="c-kind"><col class="c-unit"><col class="c-price"><col class="c-price2"><col class="c-count"></colgroup>
              <thead>
                <tr><th class="current"></th><th>N</th><th>Номенклатура</th><th>Характеристика ном...</th><th>Ед. ...</th><th>Цена</th><th>Цена (доп.)</th><th>Коли...</th></tr>
              </thead>
            </table>
          </div>
        </div>

        <div class="footer">
          <button type="button" class="text main"><svg class="icon"><use href="#printer"/></svg>Печать</button>
          <span class="sep"></span>
          <button type="button" class="text">Закрыть</button>
        </div>
      </form>
    </section>
  </main>
</body>
</html>
```

FILE: styles.css
```
* {
  box-sizing: border-box;
}

body {
  margin: 0;
  min-height: 100vh;
  display: flex;
  flex-direction: column;
  background: #ebe6da;
  color: #463f22;
  font: 11px/13px "Liberation Sans", Arial, sans-serif;
}

button, input, select {
  margin: 0;
  padding: 0;
  border: 0;
  border-radius: 0;
  background: none;
  color: inherit;
  font: inherit;
}

h1, h2, h3 {
  margin: 0;
}

.sprite {
  position: absolute;
  width: 0;
  height: 0;
}

.icon {
  display: block;
  flex: none;
  width: 16px;
  height: 16px;
}

/* main window */
.title-bar {
  display: flex;
  align-items: center;
  gap: 3px;
  height: 23px;
  padding: 0 2px;
  background: linear-gradient(#0a50d8, #0054e3 30%, #0560f8 75%, #0560f8 90%, #0038a8);
  color: #fff;
}

.title-bar h1 {
  font: bold 12px/16px "DejaVu Sans Condensed", "DejaVu Sans", sans-serif;
}

.menu {
  display: flex;
  align-items: center;
  height: 23px;
}

.menu .grip {
  margin-right: 5px;
}

.menu a {
  padding: 0 5px;
  color: #463f22;
  text-decoration: none;
}

.grip {
  flex: none;
  width: 3px;
  height: 13px;
  margin: 0 3px 0 2px;
  background: repeating-linear-gradient(#aaa498 0 1px, #f4f0e6 1px 2px);
}

.toolbar {
  display: flex;
  align-items: center;
  gap: 5px;
  height: 24px;
}

.toolbar.trade {
  gap: 7px;
  height: 26px;
}

.group {
  display: flex;
  align-items: center;
}

.toolbar button, .commands button, .actions button {
  display: flex;
  flex: none;
  align-items: center;
  justify-content: center;
  min-width: 22px;
  height: 20px;
}

.sep {
  flex: none;
  width: 1px;
  height: 16px;
  margin: 0 2px;
  background: #c6c0b0;
}

.search {
  display: flex;
  width: 143px;
  height: 18px;
  margin: 0 3px 0 0;
  background: #fffef2;
}

.search input {
  flex: 1;
  min-width: 0;
}

.toolbar .drop {
  min-width: 12px;
  height: 18px;
  background: #eee9de;
}

.drop::after, .more::after, .arrow::after {
  content: "";
  border: 3px solid transparent;
  border-bottom: 0;
  border-top-color: #463f22;
}

.drop::after {
  border-top-color: #aaa498;
}

.toolbar .more {
  min-width: 10px;
  align-items: flex-end;
  padding-bottom: 2px;
}

.more::after {
  border-width: 4px 4px 0;
}

.toolbar .mem {
  color: #aaa498;
  font-weight: bold;
}

.workspace {
  flex: 1;
  padding-bottom: 16px;
  border-top: 1px solid #77776c;
  border-left: 2px solid #8c8c80;
  background: #d7d3ba;
}

/* inner window */
.window {
  width: calc(80% + 1px);
  min-width: 680px;
  padding: 1px 2px 2px 3px;
  border: solid #8f8f88;
  border-width: 0 1px 1px 0;
  background: #cacaca;
}

.window-title {
  display: flex;
  align-items: center;
  height: 20px;
  color: #333;
}

.window-title h2 {
  flex: 1;
  padding-left: 4px;
  font: bold 11px/14px "DejaVu Sans Condensed", "DejaVu Sans", sans-serif;
}

.window-title button {
  width: 20px;
  height: 16px;
}

.window-title button svg, .field button svg {
  display: block;
  width: 12px;
  height: 12px;
  margin: auto;
}

.window-body {
  border: 1px solid #6c6c68;
  background: #fffcf0;
}

.actions {
  display: flex;
  align-items: center;
  height: 24px;
  border-bottom: 1px solid #b6b19c;
  background: #ebe4d8;
}

button.text {
  display: flex;
  align-items: center;
  gap: 4px;
  padding: 0 4px;
}

.content {
  padding: 8px 7px 13px 7px;
}

.fields {
  display: grid;
  grid-template-columns: 72px minmax(0, 235fr) 95px minmax(0, 192fr) 52px minmax(0, 88fr);
  row-gap: 5px;
}

.fields > label {
  line-height: 18px;
}

.fields .second {
  padding-left: 13px;
}

.fields .third {
  padding-left: 6px;
}

.fields .tall {
  height: 26px;
  line-height: 13px;
}

.field {
  display: flex;
  height: 18px;
  border: 1px solid #a8a48c;
  background: #fff;
  color: #000;
}

.field input {
  flex: 1;
  min-width: 0;
  padding: 0 2px;
}

.field button {
  flex: none;
  width: 14px;
  border-left: 1px solid #b6b19c;
  background: #ebe4d8;
  color: #463f22;
}

.selected input {
  margin: 1px;
  padding: 0 1px;
  outline: 1px dotted #fff;
  outline-offset: -1px;
  background: #4a60b8;
  color: #fff;
}

.counts {
  display: flex;
}

.counts label {
  width: 84px;
  padding: 0 10px;
}

.number {
  width: 40px;
}

.number input {
  text-align: right;
}

h3 {
  margin-top: 4px;
  border-bottom: 1px solid #a8a48c;
  color: #8a5c10;
  font-size: 12px;
  line-height: 14px;
}

.options {
  display: flex;
  align-items: center;
  margin-top: 1px;
}

.check {
  display: flex;
  align-items: center;
  gap: 3px;
  width: 229px;
  padding-top: 3px;
}

input[type="checkbox"] {
  appearance: none;
  width: 12px;
  height: 12px;
  border: 1px solid #a8a48c;
  background: #fff;
}

input[type="checkbox"]:checked::after {
  content: "";
  display: block;
  width: 7px;
  height: 4px;
  margin: 1px;
  border: solid #000;
  border-width: 0 0 2px 2px;
  transform: rotate(-45deg);
}

.pick {
  position: relative;
  width: 177px;
  margin-left: 10px;
}

.pick select {
  flex: 1;
  appearance: none;
}

.pick::after {
  content: "";
  position: absolute;
  top: 0;
  right: 0;
  width: 15px;
  height: 16px;
  border-left: 1px solid #b6b19c;
  background: #ebe4d8;
  pointer-events: none;
}

.pick::before {
  content: "";
  position: absolute;
  z-index: 1;
  top: 6px;
  right: 3px;
  border: 4px solid transparent;
  border-width: 4px 4px 0;
  border-top-color: #463f22;
  pointer-events: none;
}

.commands {
  display: flex;
  align-items: center;
  height: 22px;
}

.commands .sep {
  margin: 0 3px 0 2px;
}

.commands .text {
  padding: 0 3px;
}

.grid {
  border: 1px solid #a8a48c;
  background: #fff;
}

.filter {
  display: flex;
  flex-direction: column;
  height: 71px;
}

.filter::after {
  content: "";
  height: 6px;
  margin-top: auto;
  border-top: 2px solid #a8a48c;
  background: #fffcf0;
}

.goods-commands {
  margin: 2px 0 0;
}

.goods {
  height: 209px;
}

table {
  width: 100%;
  table-layout: fixed;
  border-collapse: collapse;
}

th, td {
  height: 19px;
  padding: 0 4px;
  border-right: 1px solid #b6b49c;
  border-bottom: 1px solid #b6b49c;
  overflow: hidden;
  text-align: left;
  white-space: nowrap;
}

th {
  height: 20px;
  background: #f2f0dc;
  font-weight: normal;
}

th:last-child, td:last-child {
  border-right: 0;
}

td {
  color: #000;
}

th.current {
  background: #d0ccb4;
}

td.active {
  background: #4a60b8;
  color: #fff;
}

td.mark {
  background: #fffcf0;
}

.mark input {
  display: block;
}

.c-mark { width: 21px; }
.c-name { width: 198px; }
.c-kind { width: 118px; }
.c-num { width: 29px; }
.c-unit { width: 35px; }
.c-price { width: 55px; }
.c-price2 { width: 63px; }
.c-count { width: 42px; }

.footer {
  display: flex;
  align-items: center;
  justify-content: flex-end;
  height: 31px;
  border-top: 1px solid #b6b19c;
  border-bottom: 7px solid #fffcf0;
  background: #e8e4d8;
}

.footer .text {
  height: 20px;
}

.footer .icon {
  width: 12px;
  height: 12px;
}

.footer .main {
  font: bold 11px/14px "DejaVu Sans Condensed", "DejaVu Sans", sans-serif;
}
```
